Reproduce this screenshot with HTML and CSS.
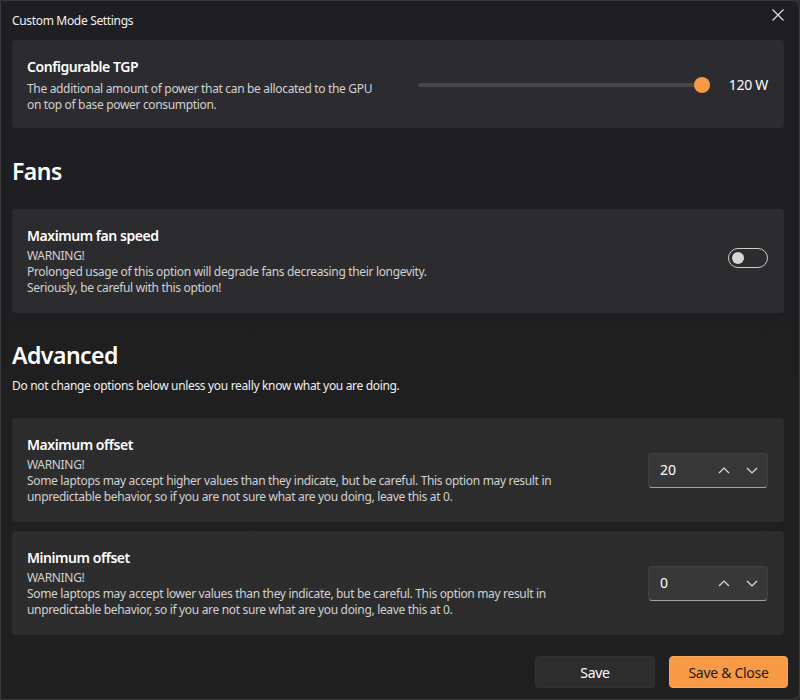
FILE: index.html
```html
<!DOCTYPE html>
<html lang="en">
<head>
<meta charset="utf-8">
<title>Custom Mode Settings</title>
<link rel="stylesheet" href="styles.css">
</head>
<body>
<div class="window">
  <header class="titlebar">
    <span class="title">Custom Mode Settings</span>
    <button class="close" aria-label="Close">
      <svg width="12" height="12" viewBox="0 0 12 12"><path d="M0.5 0.5 L11.5 11.5 M11.5 0.5 L0.5 11.5" stroke="#e6e6e6" stroke-width="1.1" fill="none"/></svg>
    </button>
  </header>

  <main class="content">
    <section class="card card-tgp">
      <div class="card-text">
        <div class="card-title">Configurable TGP</div>
        <div class="desc">The additional amount of power that can be allocated to the GPU<br>on top of base power consumption.</div>
      </div>
      <div class="slider-wrap">
        <div class="slider">
          <div class="track"></div>
          <div class="thumb"></div>
        </div>
        <span class="slider-value">120 W</span>
      </div>
    </section>

    <h2 class="section-heading fans">Fans</h2>

    <section class="card">
      <div class="card-text">
        <div class="card-title">Maximum fan speed</div>
        <div class="desc">WARNING!<br>Prolonged usage of this option will degrade fans decreasing their longevity.<br>Seriously, be careful with this option!</div>
      </div>
      <div class="toggle"><span class="knob"></span></div>
    </section>

    <h2 class="section-heading advanced">Advanced</h2>
    <p class="section-desc">Do not change options below unless you really know what you are doing.</p>

    <section class="card">
      <div class="card-text">
        <div class="card-title">Maximum offset</div>
        <div class="desc">WARNING!<br>Some laptops may accept higher values than they indicate, but be careful. This option may result in<br>unpredictable behavior, so if you are not sure what are you doing, leave this at 0.</div>
      </div>
      <div class="numberbox">
        <span class="nb-value">20</span>
        <span class="spin">
          <span class="spin-btn"><svg width="12" height="7" viewBox="0 0 12 7"><path d="M1 6 L6 1 L11 6" stroke="#e0e0e0" stroke-width="1.2" fill="none"/></svg></span>
          <span class="spin-btn"><svg width="12" height="7" viewBox="0 0 12 7"><path d="M1 1 L6 6 L11 1" stroke="#e0e0e0" stroke-width="1.2" fill="none"/></svg></span>
        </span>
      </div>
    </section>

    <section class="card card-gap">
      <div class="card-text">
        <div class="card-title">Minimum offset</div>
        <div class="desc">WARNING!<br>Some laptops may accept lower values than they indicate, but be careful. This option may result in<br>unpredictable behavior, so if you are not sure what are you doing, leave this at 0.</div>
      </div>
      <div class="numberbox">
        <span class="nb-value">0</span>
        <span class="spin">
          <span class="spin-btn"><svg width="12" height="7" viewBox="0 0 12 7"><path d="M1 6 L6 1 L11 6" stroke="#e0e0e0" stroke-width="1.2" fill="none"/></svg></span>
          <span class="spin-btn"><svg width="12" height="7" viewBox="0 0 12 7"><path d="M1 1 L6 6 L11 1" stroke="#e0e0e0" stroke-width="1.2" fill="none"/></svg></span>
        </span>
      </div>
    </section>
  </main>

  <footer class="footer">
    <button class="btn btn-secondary">Save</button>
    <button class="btn btn-accent">Save &amp; Close</button>
  </footer>
</div>
</body>
</html>
```

FILE: styles.css
```css
html, body {
  margin: 0;
  padding: 0;
  background: #2c2c2c;
}

body {
  font-family: "Noto Sans", "Open Sans", sans-serif;
  color: #ffffff;
}

.window {
  box-sizing: border-box;
  width: 800px;
  height: 700px;
  border: 1px solid #3a3a3c;
  border-radius: 0 8px 8px 0;
  background: linear-gradient(180deg, #1f1e23 0%, #1f1f21 45%, #202020 100%);
  display: flex;
  flex-direction: column;
  overflow: hidden;
}

.titlebar {
  height: 39px;
  display: flex;
  justify-content: space-between;
  align-items: flex-start;
  padding: 0 15px 0 11px;
  flex-shrink: 0;
}

.title {
  align-self: center;
  font-size: 12px;
  line-height: 16px;
  letter-spacing: -0.33px;
  color: #f2f2f2;
}

.close {
  margin-top: 8px;
  width: 12px;
  height: 12px;
  padding: 0;
  border: 0;
  background: none;
  display: flex;
}

.content {
  flex: 1;
  padding: 0 15px 0 11px;
}

.card {
  background: rgba(255, 255, 255, 0.058);
  border-radius: 4px;
  padding: 17px 16px 17px 15px;
  display: flex;
  align-items: center;
  justify-content: space-between;
}

.card-gap {
  margin-top: 9px;
}

.card-title {
  font-size: 14px;
  line-height: 20px;
  font-weight: 600;
  letter-spacing: -0.45px;
  margin-bottom: 2px;
}

.desc {
  font-size: 12px;
  line-height: 16px;
  letter-spacing: -0.33px;
  color: #d2d2d2;
}

.card-tgp {
  padding-bottom: 15px;
}

.card-tgp .card-title {
  margin-bottom: 4px;
}

.section-heading {
  margin: 0;
  font-size: 23px;
  line-height: 32px;
  font-weight: 600;
  letter-spacing: -0.5px;
}

.section-heading.fans {
  margin: 27px 0 22px;
}

.section-heading.advanced {
  margin: 26px 0 7px;
}

.section-desc {
  margin: 0 0 24px;
  font-size: 12px;
  line-height: 16px;
  letter-spacing: -0.33px;
  color: #f0f0f0;
}

/* slider */
.slider-wrap {
  display: flex;
  align-items: center;
  gap: 19px;
}

.slider {
  position: relative;
  width: 292px;
  height: 16px;
}

.track {
  position: absolute;
  left: 0;
  right: 0;
  top: 6px;
  height: 4px;
  border-radius: 2px;
  background: #47464b;
}

.thumb {
  position: absolute;
  left: 276px;
  top: 0;
  width: 16px;
  height: 16px;
  border-radius: 50%;
  background: #f89a45;
}

.slider-value {
  font-size: 14px;
  line-height: 20px;
  letter-spacing: -0.3px;
  min-width: 38px;
}

/* toggle */
.toggle {
  box-sizing: border-box;
  width: 40px;
  height: 20px;
  border: 1px solid #cfcfcf;
  border-radius: 10px;
  display: flex;
  align-items: center;
  padding-left: 3px;
  margin-bottom: 6px;
}

.knob {
  width: 12px;
  height: 12px;
  border-radius: 50%;
  background: #d6d6d6;
}

/* number box */
.numberbox {
  box-sizing: border-box;
  width: 120px;
  height: 35px;
  background: #383838;
  border: 1px solid #414141;
  border-bottom: 1px solid #a2a2a2;
  border-radius: 4px;
  display: flex;
  align-items: center;
  justify-content: space-between;
  padding: 0 1px 0 11px;
}

.nb-value {
  font-size: 14px;
  line-height: 20px;
}

.spin {
  display: flex;
}

.spin-btn {
  width: 28px;
  height: 28px;
  display: flex;
  align-items: center;
  justify-content: center;
}

/* footer */
.footer {
  display: flex;
  justify-content: flex-end;
  gap: 14px;
  padding: 0 11px 11px 0;
  flex-shrink: 0;
}

.btn {
  box-sizing: border-box;
  width: 120px;
  height: 32px;
  border-radius: 4px;
  font-family: "Noto Sans", "Open Sans", sans-serif;
  font-size: 14px;
  letter-spacing: -0.3px;
  cursor: pointer;
}

.btn-secondary {
  background: #2d2d2d;
  border: 1px solid #323232;
  color: #ffffff;
}

.btn-accent {
  width: 119px;
  background: #f89a45;
  border: 1px solid #f9a558;
  color: #1a1a1a;
}
```
